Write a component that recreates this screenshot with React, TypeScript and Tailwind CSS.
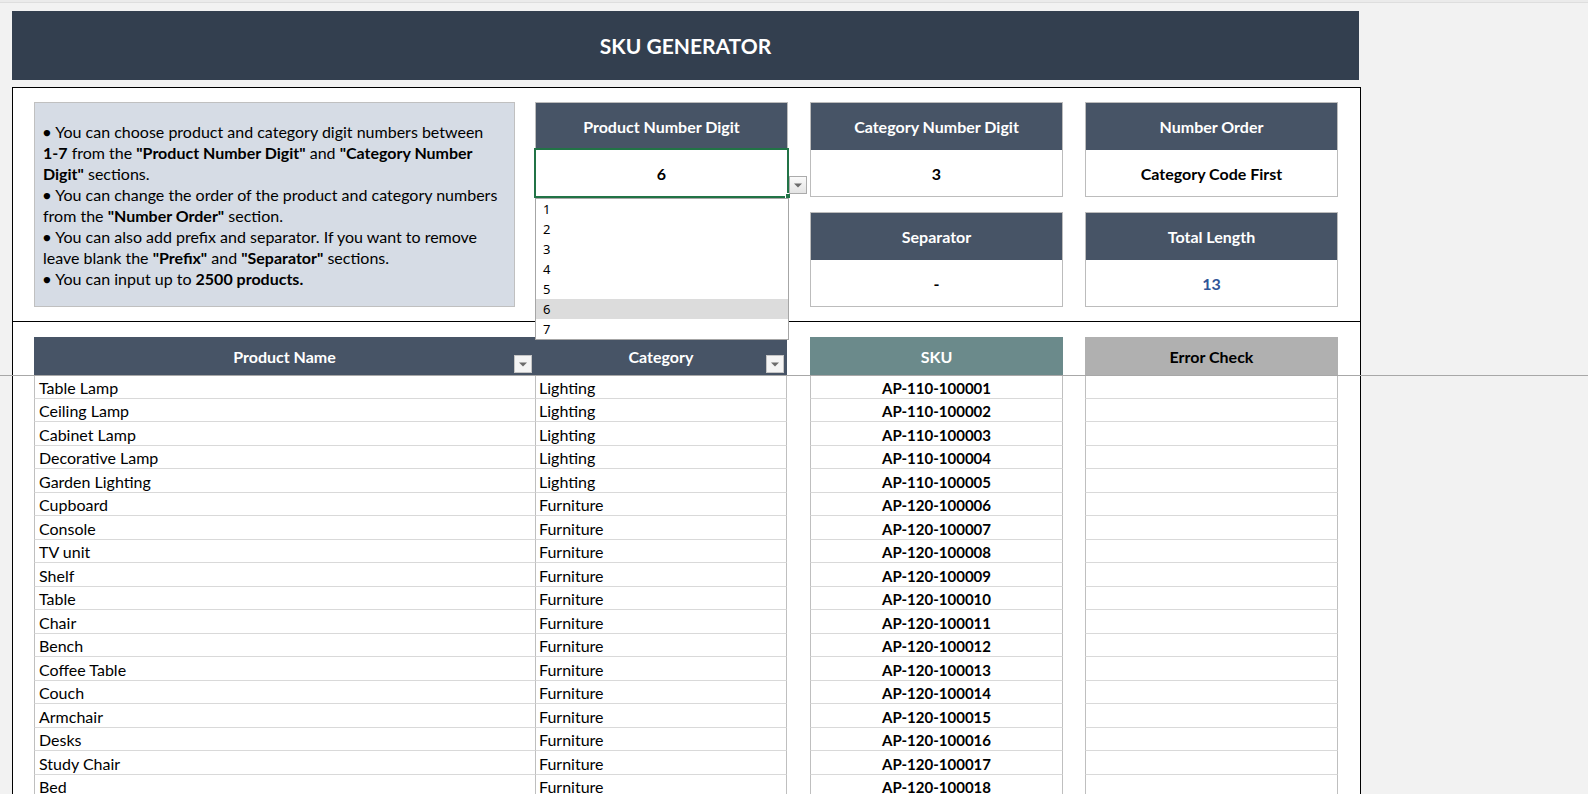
import React from "react";

const rows: [string, string, string][] = [
  ["Table Lamp", "Lighting", "AP-110-100001"],
  ["Ceiling Lamp", "Lighting", "AP-110-100002"],
  ["Cabinet Lamp", "Lighting", "AP-110-100003"],
  ["Decorative Lamp", "Lighting", "AP-110-100004"],
  ["Garden Lighting", "Lighting", "AP-110-100005"],
  ["Cupboard", "Furniture", "AP-120-100006"],
  ["Console", "Furniture", "AP-120-100007"],
  ["TV unit", "Furniture", "AP-120-100008"],
  ["Shelf", "Furniture", "AP-120-100009"],
  ["Table", "Furniture", "AP-120-100010"],
  ["Chair", "Furniture", "AP-120-100011"],
  ["Bench", "Furniture", "AP-120-100012"],
  ["Coffee Table", "Furniture", "AP-120-100013"],
  ["Couch", "Furniture", "AP-120-100014"],
  ["Armchair", "Furniture", "AP-120-100015"],
  ["Desks", "Furniture", "AP-120-100016"],
  ["Study Chair", "Furniture", "AP-120-100017"],
  ["Bed", "Furniture", "AP-120-100018"],
];

function Caret() {
  return (
    <svg width="8" height="5" viewBox="0 0 8 5">
      <path d="M0 0.5h8L4 4.5z" fill="#6b6b6b" />
    </svg>
  );
}

function FilterButton() {
  return (
    <span className="absolute right-[3px] bottom-[2px] flex h-[18px] w-[18px] items-center justify-center border border-[#c4c4c4] bg-[#f4f4f4]">
      <Caret />
    </span>
  );
}

function Bullet() {
  return <span className="mr-[1px] text-[13px] align-[1px]">●</span>;
}

function Card({ title, value, valueClass = "text-black" }: { title: string; value: string; valueClass?: string }) {
  return (
    <div className="flex h-[95px] flex-col border border-[#bcbcbc]">
      <div className="flex h-[47px] items-center justify-center bg-[#475466] pt-[1px] font-bold text-white">{title}</div>
      <div className={`flex flex-1 items-center justify-center bg-white pt-[2px] font-bold ${valueClass}`}>{value}</div>
    </div>
  );
}

export default function App() {
  return (
    <div className="relative h-[794px] w-full overflow-hidden bg-[#f2f2f2] font-[Lato,'Liberation_Sans',sans-serif] text-[16px] text-black">
      <div className="h-[3px] border-b border-[#dedede] bg-[#ebebeb]" />

      <div className="ml-[12px] mt-[8px] flex h-[69px] w-[1347px] items-center justify-center bg-[#333f4f] pt-[1px] text-[21px] font-bold text-white">
        SKU GENERATOR
      </div>

      <div className="ml-[12px] mt-[7px] h-[720px] w-[1349px] border-l border-r border-t border-black bg-white">
        {/* settings area */}
        <div className="flex border-b border-black pb-[14px] pl-[21px] pt-[14px]">
          <div className="flex h-[205px] w-[481px] items-center border border-[#c0c0c0] bg-[#d6dce5] pl-[8px] pt-[3px] leading-[20.9px] whitespace-nowrap">
            <div>
              <Bullet /> You can choose product and category digit numbers between
              <br />
              <b>1-7</b> from the <b>"Product Number Digit"</b> and <b>"Category Number</b>
              <br />
              <b>Digit"</b> sections.
              <br />
              <Bullet /> You can change the order of the product and category numbers
              <br />
              from the <b>"Number Order"</b> section.
              <br />
              <Bullet /> You can also add prefix and separator. If you want to remove
              <br />
              leave blank the <b>"Prefix"</b> and <b>"Separator"</b> sections.
              <br />
              <Bullet /> You can input up to <b>2500 products.</b>
            </div>
          </div>

          <div className="ml-[20px] w-[253px]">
            <Card title="Product Number Digit" value="6" />
          </div>

          <div className="ml-[22px] flex w-[253px] flex-col gap-[15px]">
            <Card title="Category Number Digit" value="3" />
            <Card title="Separator" value="-" />
          </div>

          <div className="ml-[22px] flex w-[253px] flex-col gap-[15px]">
            <Card title="Number Order" value="Category Code First" />
            <Card title="Total Length" value="13" valueClass="text-[#2f5597]" />
          </div>
        </div>

        {/* table */}
        <div className="flex pl-[21px] pt-[15px]">
          <div className="flex">
            <div className="w-[501px]">
              <div className="relative flex h-[38px] items-center justify-center bg-[#475466] pt-[1px] font-bold text-white">
                Product Name
                <FilterButton />
              </div>
              {rows.map(([name]) => (
                <div key={name} className="flex h-[23.5px] items-center border-b border-l border-[#d9d9d9] border-l-[#bfbfbf] pl-[4px] pt-[3px]">
                  {name}
                </div>
              ))}
            </div>
            <div className="w-[252px]">
              <div className="relative flex h-[38px] items-center justify-center bg-[#475466] pt-[1px] font-bold text-white">
                Category
                <FilterButton />
              </div>
              {rows.map(([name, cat]) => (
                <div key={name} className="flex h-[23.5px] items-center border-b border-l border-r border-[#d9d9d9] border-l-[#bfbfbf] border-r-[#bfbfbf] pl-[3px] pt-[3px]">
                  {cat}
                </div>
              ))}
            </div>
          </div>

          <div className="ml-[23px] w-[253px]">
            <div className="flex h-[38px] items-center justify-center bg-[#6b8a8b] pt-[1px] font-bold text-white">SKU</div>
            {rows.map(([name, , sku]) => (
              <div key={name} className="flex h-[23.5px] items-center justify-center border-b border-l border-r border-[#d9d9d9] border-l-[#bfbfbf] border-r-[#bfbfbf] pt-[3px] text-[15px] font-bold">
                {sku}
              </div>
            ))}
          </div>

          <div className="ml-[22px] w-[253px]">
            <div className="flex h-[38px] items-center justify-center bg-[#b0b0b0] pt-[1px] font-bold text-black">Error Check</div>
            {rows.map(([name]) => (
              <div key={name} className="h-[23.5px] border-b border-l border-r border-[#d9d9d9] border-l-[#bfbfbf] border-r-[#bfbfbf]" />
            ))}
          </div>
        </div>
      </div>

      {/* frozen pane line */}
      <div className="absolute left-0 top-[375px] h-px w-full bg-[#a8a8a8]" />

      {/* selected cell */}
      <div className="absolute left-[534px] top-[148px] h-[50px] w-[255px] border-2 border-[#217346]" />
      <div className="absolute left-[785px] top-[193px] h-[6px] w-[6px] border border-white bg-[#217346]" />

      {/* data validation arrow */}
      <div className="absolute left-[789px] top-[176px] flex h-[18px] w-[18px] items-center justify-center border border-[#ababab] bg-[linear-gradient(#fafafa,#e4e4e4)]">
        <Caret />
      </div>

      {/* dropdown list */}
      <div className="absolute left-[535px] top-[198px] w-[254px] border border-[#a6a6a6] bg-white font-['Noto_Sans',sans-serif] text-[13px] leading-[20px]">
        {["1", "2", "3", "4", "5", "6", "7"].map((n) => (
          <div key={n} className={`h-[20px] pl-[7px] ${n === "6" ? "bg-[#dcdcdc]" : ""}`}>
            {n}
          </div>
        ))}
      </div>
    </div>
  );
}
